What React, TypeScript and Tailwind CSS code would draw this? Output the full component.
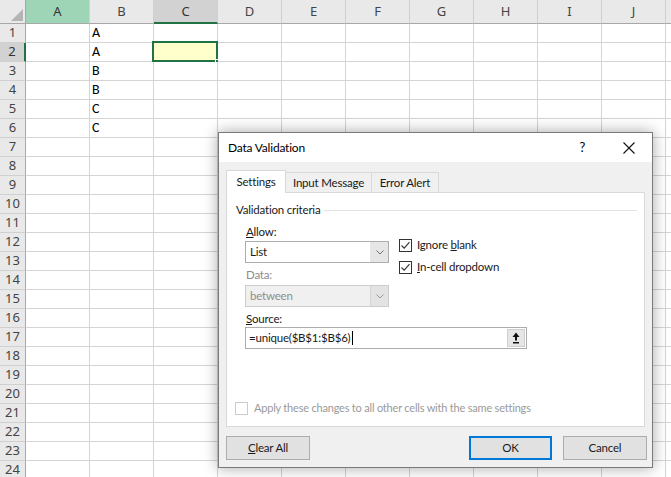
import React from "react";

const COLS = ["A", "B", "C", "D", "E", "F", "G", "H", "I", "J", "K"];
const ROWS = Array.from({ length: 24 }, (_, i) => i + 1);
const DATA: Record<string, string> = { "B1": "A", "B2": "A", "B3": "B", "B4": "B", "B5": "C", "B6": "C" };

const HDR = { fontFamily: '"Segoe UI", "Noto Sans", sans-serif' };
const UI = { fontFamily: '"Segoe UI", "Lato", "Noto Sans", sans-serif' };
const CELL = { fontFamily: '"Carlito", "Lato", "Noto Sans", sans-serif' };

function Check({ checked, disabled }: { checked?: boolean; disabled?: boolean }) {
  return (
    <div
      className={`w-[13px] h-[13px] border flex items-center justify-center bg-white shrink-0 ${
        disabled ? "border-[#cccccc]" : "border-[#333333]"
      }`}
    >
      {checked && (
        <svg width="11" height="11" viewBox="0 0 11 11">
          <path d="M1.5 5.5 L4.2 8.2 L9.5 2.2" fill="none" stroke="#333" strokeWidth="1.1" />
        </svg>
      )}
    </div>
  );
}

function Chevron({ color }: { color: string }) {
  return (
    <svg width="8" height="5" viewBox="0 0 8 5">
      <path d="M0.5 0.5 L4 4 L7.5 0.5" fill="none" stroke={color} strokeWidth="1" />
    </svg>
  );
}

function Sheet() {
  return (
    <div className="grid grid-cols-[26px_repeat(11,64px)] grid-rows-[24px_repeat(24,19px)]">
      <div className="bg-[#e9e9e9] border-r border-b border-[#a8a8a8] relative">
        <svg className="absolute right-[2px] bottom-[2px]" width="12" height="12" viewBox="0 0 12 12">
          <path d="M12 0 L12 12 L0 12 Z" fill="#b4b4b4" />
        </svg>
      </div>
      {COLS.map((c) => {
        let cls = "bg-[#e9e9e9] text-[#444444] border-b border-b-[#a8a8a8]";
        if (c === "A") cls = "bg-[#9fd5b7] text-[#333333] border-b border-b-[#a8a8a8]";
        if (c === "C") cls = "bg-[#d2d2d2] text-[#333333] border-b-2 border-b-[#217346]";
        return (
          <div
            key={c}
            style={HDR}
            className={`${cls} border-r border-r-[#d0d0d0] flex items-center justify-center text-[13px] pt-[1px]`}
          >
            {c === "K" ? "" : c}
          </div>
        );
      })}
      {ROWS.map((r) => (
        <React.Fragment key={r}>
          <div
            style={HDR}
            className={`${
              r === 2
                ? "bg-[#d2d2d2] border-r-2 border-r-[#217346] text-[#333333]"
                : "bg-[#e9e9e9] border-r border-r-[#a8a8a8] text-[#444444]"
            } border-b border-b-[#d0d0d0] flex items-center justify-center text-[13px]`}
          >
            {r}
          </div>
          {COLS.map((c) => {
            const key = `${c}${r}`;
            const sel = key === "C2";
            return (
              <div
                key={key}
                style={CELL}
                className={`relative border-r border-b border-[#d4d4d4] text-[14px] text-black pl-[2px] leading-[18px] ${
                  sel ? "bg-[#ffffcc]" : "bg-white"
                }`}
              >
                {DATA[key] ?? ""}
                {sel && (
                  <>
                    <div className="absolute -left-[2px] -top-[2px] -right-[1px] -bottom-[1px] border-2 border-[#217346]" />
                    <div className="absolute -right-[4px] -bottom-[4px] w-[6px] h-[6px] bg-[#217346] border border-white" />
                  </>
                )}
              </div>
            );
          })}
        </React.Fragment>
      ))}
    </div>
  );
}

function Dialog() {
  return (
    <div
      style={UI}
      className="absolute left-[218px] top-[132px] w-[435px] h-[336px] border border-[#7a7a7a] bg-[#f0f0f0] shadow-[0_0_14px_rgba(0,0,0,0.35)] flex flex-col text-[11.5px] tracking-[-0.2px] text-[#1a1a1a]"
    >
      <div className="h-[29px] bg-white flex items-center pl-[9px] shrink-0">
        <span className="text-[12px] text-black">Data Validation</span>
        <span className="ml-auto mr-[38px] text-[13px] text-black">?</span>
        <svg className="mr-[17px]" width="12" height="12" viewBox="0 0 12 12">
          <path d="M0.5 0.5 L11.5 11.5 M11.5 0.5 L0.5 11.5" stroke="#111" strokeWidth="1.1" />
        </svg>
      </div>
      <div className="px-[7px] pt-[7px] flex flex-col">
        <div className="flex items-end h-[23px]">
          <div className="w-[60px] h-[23px] bg-white border border-[#d9d9d9] border-b-0 relative z-10 -mb-px flex items-center justify-center">
            Settings
          </div>
          <div className="w-[86px] h-[20px] border border-[#d9d9d9] border-l-0 border-b-0 flex items-center justify-center">
            Input Message
          </div>
          <div className="w-[67px] h-[20px] border border-[#d9d9d9] border-l-0 border-b-0 flex items-center justify-center">
            Error Alert
          </div>
        </div>
        <div className="h-[235px] bg-white border border-[#d9d9d9] flex flex-col">
          <div className="flex items-center mt-[9px] pl-[9px] pr-[7px] h-[16px]">
            <span>Validation criteria</span>
            <div className="flex-1 h-px bg-[#e3e3e3] ml-[4px]" />
          </div>
          <div className="flex pl-[18px]">
            <div className="w-[144px] flex flex-col">
              <div className="mt-[5px] h-[16px] pl-[1px]">
                <span className="underline">A</span>llow:
              </div>
              <div className="mt-[2px] h-[22px] border border-[#adadad] bg-white flex items-center">
                <span className="pl-[4px] flex-1">List</span>
                <div className="w-[18px] h-full bg-[#e6e6e6] border-l border-[#e6e6e6] flex items-center justify-center">
                  <Chevron color="#707070" />
                </div>
              </div>
              <div className="mt-[3px] h-[16px] pl-[1px] text-[#8d8d8d]">Data:</div>
              <div className="mt-[3px] h-[22px] border border-[#cccccc] bg-[#f0f0f0] flex items-center">
                <span className="pl-[4px] flex-1 text-[#8d8d8d]">between</span>
                <div className="w-[18px] h-full bg-[#e3e3e3] border-l border-[#d4d4d4] flex items-center justify-center">
                  <Chevron color="#9a9a9a" />
                </div>
              </div>
            </div>
            <div className="ml-[10px] pt-[16px] flex flex-col">
              <div className="h-[22px] flex items-center gap-[5px]">
                <Check checked />
                <span>
                  Ignore <span className="underline">b</span>lank
                </span>
              </div>
              <div className="h-[22px] flex items-center gap-[5px]">
                <Check checked />
                <span>
                  <span className="underline">I</span>n-cell dropdown
                </span>
              </div>
            </div>
          </div>
          <div className="pl-[18px] flex flex-col">
            <div className="mt-[3px] h-[16px] pl-[1px]">
              <span className="underline">S</span>ource:
            </div>
            <div className="mt-[1px] w-[282px] h-[22px] border border-[#adadad] bg-white flex items-center">
              <span className="pl-[3px] flex-1 flex items-center">
                =unique($B$1:$B$6)
                <span className="inline-block w-px h-[14px] bg-black ml-[1px]" />
              </span>
              <div className="w-[18px] h-[18px] mr-[1px] bg-[#e6e6e6] border border-[#cfcfcf] flex items-center justify-center">
                <svg width="8" height="12" viewBox="0 0 8 12">
                  <path d="M4 0.5 L7.5 5 L5 5 L5 8.5 L3 8.5 L3 5 L0.5 5 Z" fill="#111" />
                  <rect x="1" y="10" width="6" height="1.5" fill="#111" />
                </svg>
              </div>
            </div>
          </div>
          <div className="mt-auto mb-[10px] ml-[8px] h-[16px] flex items-center gap-[6px] text-[#9a9a9a]">
            <Check disabled />
            <span className="text-[11px]">Apply these changes to all other cells with the same settings</span>
          </div>
        </div>
        <div className="mt-[9px] flex items-center">
          <div className="w-[84px] h-[24px] bg-[#e1e1e1] border border-[#adadad] flex items-center justify-center">
            <span>
              <span className="underline">C</span>lear All
            </span>
          </div>
          <div className="ml-auto w-[83px] h-[24px] bg-[#e1e1e1] border-2 border-[#0078d7] flex items-center justify-center">
            OK
          </div>
          <div className="ml-[11px] -mr-[2px] w-[84px] h-[24px] bg-[#e1e1e1] border border-[#adadad] flex items-center justify-center">
            Cancel
          </div>
        </div>
      </div>
    </div>
  );
}

export default function App() {
  return (
    <div className="relative w-[671px] h-[477px] overflow-hidden bg-white">
      <Sheet />
      <Dialog />
    </div>
  );
}
